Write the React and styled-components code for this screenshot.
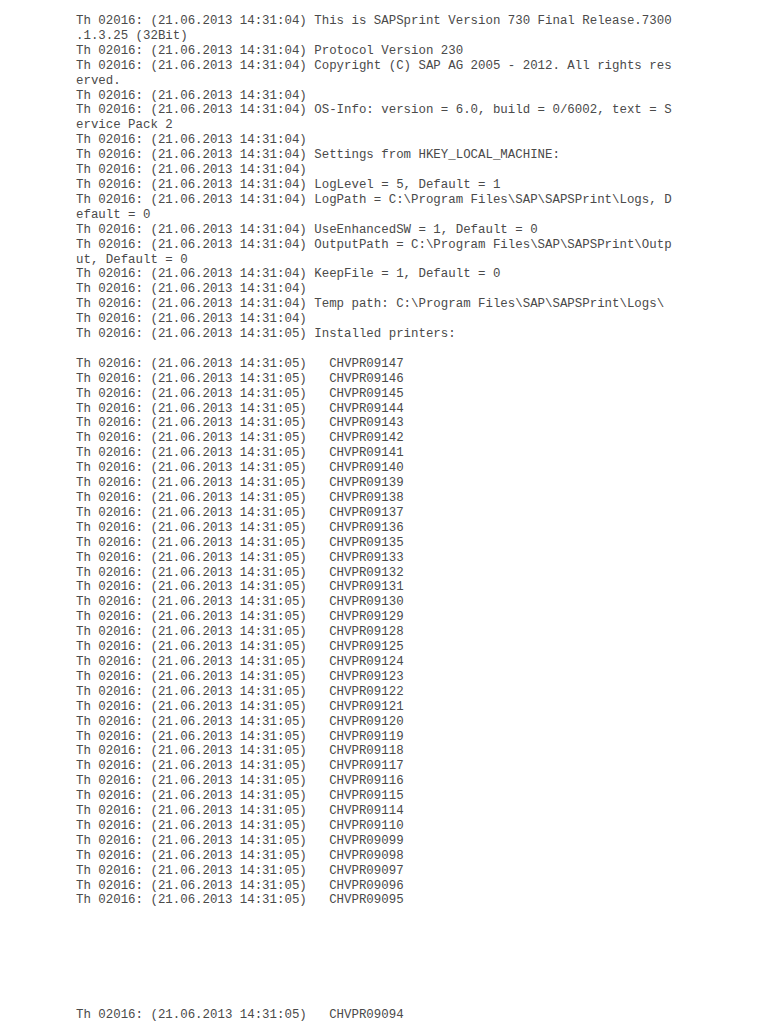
import React from 'react';
import styled, { createGlobalStyle } from 'styled-components';

const GlobalStyle = createGlobalStyle`
  html, body {
    margin: 0;
    padding: 0;
    background: #ffffff;
  }
`;

const PageStyles = styled.div`
  width: 768px;
  min-height: 1024px;
  box-sizing: border-box;
  padding: 14px 0 0 76px;
  display: flex;
  flex-direction: column;
  gap: ${(p) => p.gap}px;
`;

const LogBlock = styled.pre`
  margin: 0;
  font-family: 'Liberation Mono', 'Courier New', monospace;
  font-size: 12.42px;
  line-height: 14.9px;
  color: #4a4a4a;
  white-space: pre;
`;

const PREFIX_04 = 'Th 02016: (21.06.2013 14:31:04)';
const PREFIX_05 = 'Th 02016: (21.06.2013 14:31:05)';

const header = [
  `${PREFIX_04} This is SAPSprint Version 730 Final Release.7300`,
  '.1.3.25 (32Bit)',
  `${PREFIX_04} Protocol Version 230`,
  `${PREFIX_04} Copyright (C) SAP AG 2005 - 2012. All rights res`,
  'erved.',
  PREFIX_04,
  `${PREFIX_04} OS-Info: version = 6.0, build = 0/6002, text = S`,
  'ervice Pack 2',
  PREFIX_04,
  `${PREFIX_04} Settings from HKEY_LOCAL_MACHINE:`,
  PREFIX_04,
  `${PREFIX_04} LogLevel = 5, Default = 1`,
  `${PREFIX_04} LogPath = C:\\Program Files\\SAP\\SAPSPrint\\Logs, D`,
  'efault = 0',
  `${PREFIX_04} UseEnhancedSW = 1, Default = 0`,
  `${PREFIX_04} OutputPath = C:\\Program Files\\SAP\\SAPSPrint\\Outp`,
  'ut, Default = 0',
  `${PREFIX_04} KeepFile = 1, Default = 0`,
  PREFIX_04,
  `${PREFIX_04} Temp path: C:\\Program Files\\SAP\\SAPSPrint\\Logs\\`,
  PREFIX_04,
  `${PREFIX_05} Installed printers:`,
  '',
];

const printers = [
  '09147', '09146', '09145', '09144', '09143', '09142', '09141', '09140',
  '09139', '09138', '09137', '09136', '09135', '09133', '09132', '09131',
  '09130', '09129', '09128', '09125', '09124', '09123', '09122', '09121',
  '09120', '09119', '09118', '09117', '09116', '09115', '09114', '09110',
  '09099', '09098', '09097', '09096', '09095',
];

const printerLine = (id) => `${PREFIX_05}   CHVPR${id}`;

export default function App() {
  const firstPage = [...header, ...printers.map(printerLine)].join('\n');

  return (
    <>
      <GlobalStyle />
      <PageStyles gap={100}>
        <LogBlock>{firstPage}</LogBlock>
        <LogBlock>{printerLine('09094')}</LogBlock>
      </PageStyles>
    </>
  );
}
